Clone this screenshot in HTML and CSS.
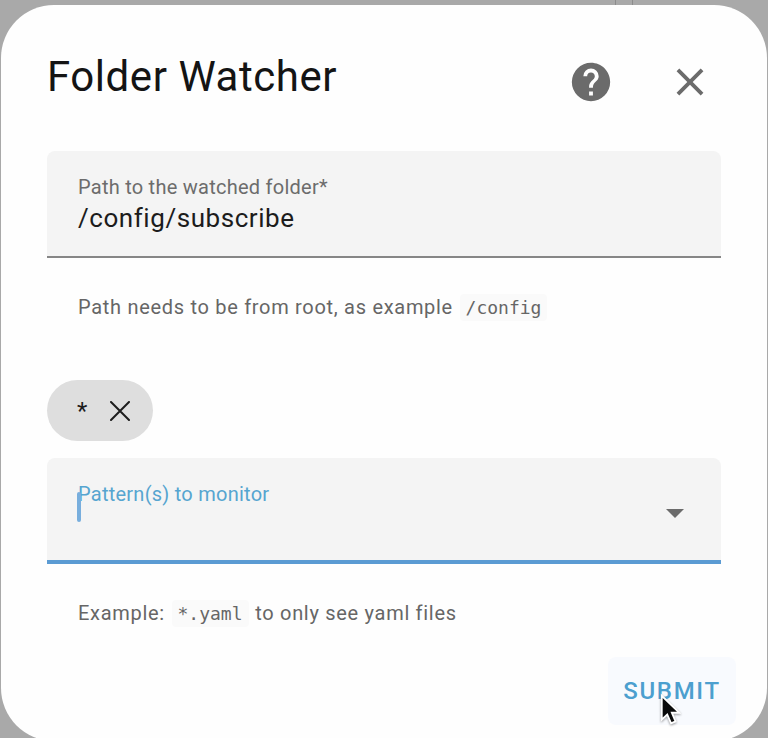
FILE: index.html
```html
<!DOCTYPE html>
<html lang="en">
<head>
    <meta charset="UTF-8">
    <meta name="viewport" content="width=device-width, initial-scale=1.0">
    <title>Folder Watcher</title>
    <link rel="stylesheet" href="styles.css">
</head>
<body>

    <div class="dialog">
        <!-- Header -->
        <div class="dialog-header">
            <h2 class="dialog-title">Folder Watcher</h2>
            <div class="icon-button">
                <svg viewBox="0 0 24 24"><path d="M15.07,11.25L14.17,12.17C13.45,12.89 13,13.5 13,15H11V14.5C11,13.39 11.45,12.39 12.17,11.67L13.41,10.41C13.78,10.05 14,9.55 14,9C14,7.89 13.1,7 12,7A2,2 0 0,0 10,9H8A4,4 0 0,1 12,5A4,4 0 0,1 16,9C16,9.88 15.64,10.67 15.07,11.25M13,19H11V17H13M12,2A10,10 0 0,0 2,12A10,10 0 0,0 12,22A10,10 0 0,0 22,12C22,6.47 17.5,2 12,2Z"/></svg>
            </div>
            <div class="icon-button">
                <svg viewBox="0 0 24 24"><path d="M19,6.41L17.59,5L12,10.59L6.41,5L5,6.41L10.59,12L5,17.59L6.41,19L12,13.41L17.59,19L19,17.59L13.41,12L19,6.41Z"/></svg>
            </div>
        </div>

        <!-- Form -->
        <div class="dialog-content">
            <div class="field">
                <span class="label">Path to the watched folder*</span>
                <span class="value">/config/subscribe</span>
            </div>
            <p class="helper">Path needs to be from root, as example <code>/config</code></p>

            <div class="chip">
                <span class="chip-text">*</span>
                <svg class="chip-close" viewBox="0 0 20 20"><path d="M1 1L19 19M19 1L1 19"/></svg>
            </div>

            <div class="field focused">
                <span class="label">Pattern(s) to monitor</span>
                <span class="caret"></span>
                <svg class="arrow" viewBox="0 0 18 9"><path d="M0 0H18L9 9Z"/></svg>
            </div>
            <p class="helper">Example: <code>*.yaml</code> to only see yaml files</p>
        </div>

        <!-- Actions -->
        <div class="dialog-actions">
            <button class="submit">SUBMIT</button>
        </div>
    </div>

    <svg class="cursor" viewBox="0 0 24 36"><path d="M3 3V29L9 23.5L13.2 33L18 31L14 21.5H22Z"/></svg>

</body>
</html>
```
FILE: styles.css
```css
* {
    box-sizing: border-box;
}

body {
    margin: 0;
    height: 738px;
    padding: 5px 1px 0;
    overflow: hidden;
    background-color: #a9a9a9;
    /* page borders showing behind the dialog */
    background-image: linear-gradient(#8c8c8c, #8c8c8c), linear-gradient(#8c8c8c, #8c8c8c);
    background-size: 1px 5px;
    background-position: 615px 0, 632px 0;
    background-repeat: no-repeat;
    font-family: Roboto, sans-serif;
}

.dialog {
    height: 736px;
    border-radius: 53px;
    background-color: #fefefe;
}

.dialog-header {
    display: flex;
    align-items: center;
    height: 146px;
    padding: 8px 54px 0 46px;
}

.dialog-title {
    flex: 1;
    margin: 0 0 12px;
    font-size: 42px;
    font-weight: 400;
    letter-spacing: 0.55px;
    color: #141414;
}

.icon-button {
    width: 46px;
    height: 46px;
    margin-left: 53px;
}

.icon-button svg {
    display: block;
    fill: #6b6b6b;
}

.dialog-content {
    padding: 0 46px;
}

.field {
    position: relative;
    display: flex;
    flex-direction: column;
    height: 107px;
    padding: 24px 31px 0;
    border-bottom: 2px solid #868686;
    border-radius: 8px 8px 0 0;
    background-color: #f4f4f4;
}

.label {
    font-size: 20px;
    line-height: 24px;
    letter-spacing: 0.25px;
    color: #6c6c6c;
}

.value {
    font-size: 26px;
    line-height: 38px;
    letter-spacing: 0.56px;
    color: #1c1c1c;
}

.helper {
    margin: 0;
    padding: 34px 31px 0;
    height: 122px;
    font-size: 20px;
    line-height: 30px;
    letter-spacing: 0.7px;
    color: #666;
}

.helper code {
    padding: 3px 6px;
    margin: 0 1px;
    border-radius: 4px;
    background-color: #fafafa;
    font-family: "DejaVu Sans Mono", monospace;
    font-size: 18px;
    letter-spacing: 0;
}

.chip {
    display: flex;
    align-items: center;
    width: 106px;
    height: 61px;
    margin-bottom: 17px;
    padding-left: 30px;
    border-radius: 31px;
    background-color: #dedede;
}

.chip-text {
    width: 33px;
    font-size: 24px;
    color: #1c1c1c;
}

.chip-close {
    width: 20px;
    height: 20px;
    fill: none;
    stroke: #1c1c1c;
    stroke-width: 2;
    stroke-linecap: round;
}

.field.focused {
    height: 106px;
    border-bottom: 4px solid #5b9bd3;
}

.focused .label {
    color: #56a5d0;
}

.caret {
    position: absolute;
    left: 30px;
    top: 34px;
    width: 4px;
    height: 30px;
    border-radius: 2px;
    background-color: #78aedd;
}

.arrow {
    position: absolute;
    right: 37px;
    top: 51px;
    width: 18px;
    height: 9px;
    fill: #6b6b6b;
}

.dialog-actions {
    display: flex;
    justify-content: flex-end;
    margin-top: -29px;
    padding-right: 31px;
}

.submit {
    width: 128px;
    height: 68px;
    padding: 0;
    border: none;
    border-radius: 8px;
    background-color: #f8fafe;
    font-family: Roboto, sans-serif;
    font-size: 24px;
    font-weight: 500;
    letter-spacing: 1.7px;
    color: #4c9fcf;
}

.cursor {
    position: absolute;
    left: 659px;
    top: 693px;
    width: 22px;
    height: 33px;
    fill: #0a0a0a;
    stroke: #fff;
    stroke-width: 2;
    filter: drop-shadow(0 1px 1px rgba(0, 0, 0, 0.4));
}
```
